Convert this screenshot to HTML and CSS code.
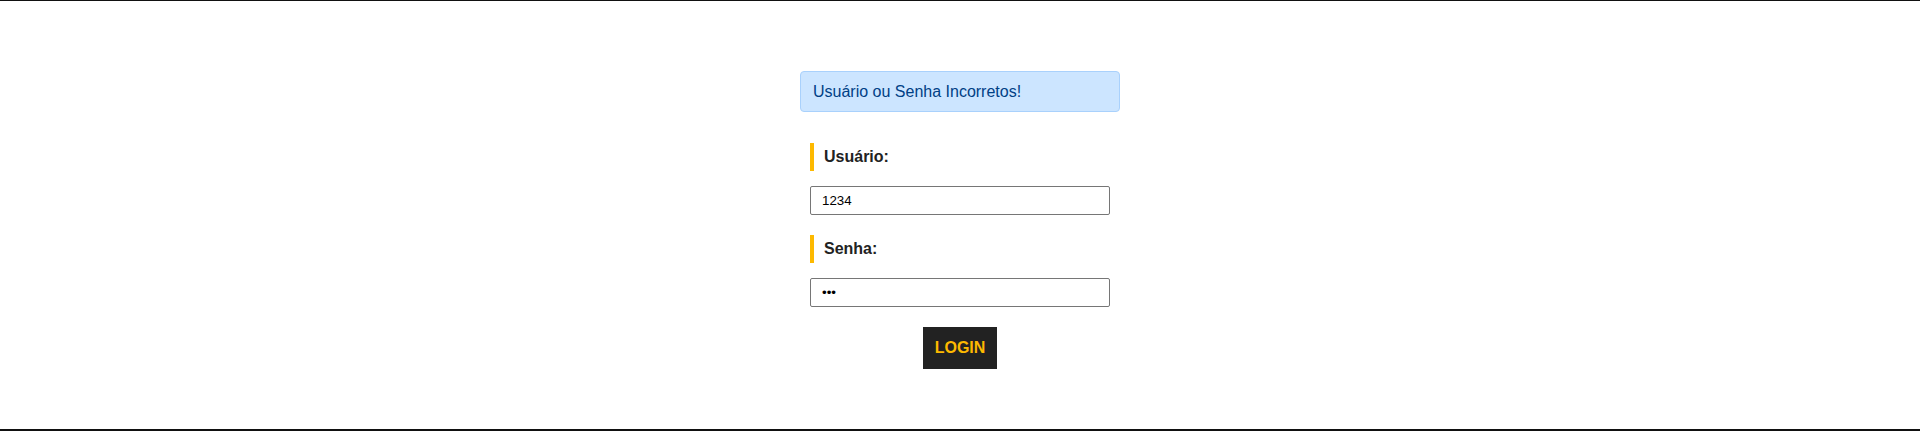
FILE: index.html
```html
<!DOCTYPE html>
<html lang="pt-BR">
<head>
<meta charset="utf-8">
<title>Login</title>
<link rel="stylesheet" href="styles.css">
</head>
<body>
<div class="page">
  <main class="login">
    <div class="alert">Usuário ou Senha Incorretos!</div>
    <form class="form" onsubmit="return false;">
      <label class="field-label first" for="user">Usuário:</label>
      <input class="field-input" id="user" type="text" value="1234">
      <label class="field-label" for="pass">Senha:</label>
      <input class="field-input" id="pass" type="password" value="123">
      <div class="actions">
        <button class="btn-login" type="submit">LOGIN</button>
      </div>
    </form>
  </main>
</div>
</body>
</html>
```
FILE: styles.css
```css
html, body {
  margin: 0;
  padding: 0;
  background: #fff;
}
body {
  font-family: "Liberation Sans", Arial, sans-serif;
}
.page {
  box-sizing: border-box;
  height: 431px;
  border-top: 1px solid #111;
  border-bottom: 2px solid #111;
  padding-top: 70px;
}
.login {
  width: 320px;
  margin: 0 auto;
}
.alert {
  box-sizing: border-box;
  width: 320px;
  padding: 11px 12px;
  font-size: 16px;
  line-height: 17px;
  color: #004085;
  background: #cce5ff;
  border: 1px solid #a9d1fc;
  border-radius: 4px;
}
.form {
  width: 300px;
  margin: 0 auto;
  display: flex;
  flex-direction: column;
}
.field-label {
  display: block;
  border-left: 4px solid #fdb900;
  padding: 5px 10px;
  font-size: 16px;
  line-height: 18px;
  font-weight: bold;
  color: #222;
  margin-top: 20px;
  margin-bottom: 15px;
}
.field-label.first {
  margin-top: 31px;
}
.field-input {
  box-sizing: border-box;
  width: 300px;
  height: 29px;
  margin: 0;
  padding: 0 11px;
  border: 1px solid #767676;
  border-radius: 2px;
  font-family: "Liberation Sans", Arial, sans-serif;
  font-size: 13.333px;
  color: #000;
  background: #fff;
}
.actions {
  display: flex;
  justify-content: center;
  margin-top: 20px;
}
.btn-login {
  margin: 0;
  padding: 12px 12px;
  border: none;
  border-radius: 0;
  background: #222;
  color: #fdb900;
  font-family: "Liberation Sans", Arial, sans-serif;
  font-size: 16px;
  line-height: 18px;
  font-weight: bold;
  cursor: pointer;
}
```
